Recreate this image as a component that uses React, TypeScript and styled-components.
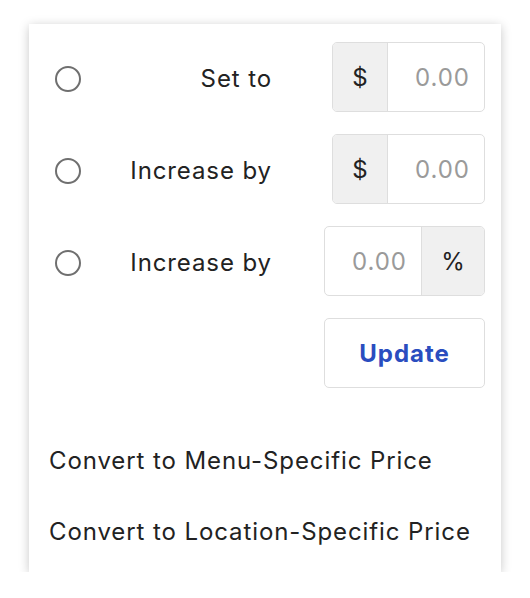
import React from 'react';
import styled, { createGlobalStyle } from 'styled-components';

const GlobalStyle = createGlobalStyle`
    body {
        margin: 0;
        background: #ffffff;
        font-family: Inter, "Noto Sans", sans-serif;
        color: #222222;
    }
`;

const Page = styled.div`
    padding: 24px 29px 0 29px;
`;

const Card = styled.div`
    width: 472px;
    height: 548px;
    box-sizing: border-box;
    background: #ffffff;
    box-shadow: 0 2px 10px rgba(0, 0, 0, 0.22);
    padding: 18px 16px 0 26px;
    display: flex;
    flex-direction: column;
`;

const Options = styled.div`
    display: flex;
    flex-direction: column;
    gap: 22px;
`;

const Row = styled.label`
    display: flex;
    align-items: center;
    height: 70px;
    font-size: 24px;
    letter-spacing: 0.9px;
`;

const Radio = styled.span`
    width: 26px;
    height: 26px;
    margin-top: 4px;
    box-sizing: border-box;
    border: 2px solid #6f6f6f;
    border-radius: 50%;
    flex: none;
`;

const Label = styled.span`
    width: 191px;
    margin-top: 2px;
    text-align: right;
`;

const InputGroup = styled.div<{ $width: number }>`
    margin-left: auto;
    width: ${p => p.$width}px;
    display: flex;
    height: 70px;
    box-sizing: border-box;
    border: 1.5px solid #dedede;
    border-radius: 5px;
    overflow: hidden;
`;

const Addon = styled.span<{ $width: number; $side: 'left' | 'right' }>`
    width: ${p => p.$width}px;
    flex: none;
    background: #f0f0f0;
    display: flex;
    align-items: center;
    justify-content: center;
    letter-spacing: 0;
    ${p => (p.$side === 'left' ? 'border-right' : 'border-left')}: 1.5px solid #dedede;
`;

const Field = styled.span`
    flex: 1;
    display: flex;
    align-items: center;
    justify-content: flex-end;
    padding-right: 14px;
    color: #9a9a9a;
    letter-spacing: 1px;
`;

const Actions = styled.div`
    display: flex;
    justify-content: flex-end;
`;

const UpdateButton = styled.button`
    width: 161px;
    height: 70px;
    background: #ffffff;
    border: 1.5px solid #dedede;
    border-radius: 5px;
    font-family: Inter, "Noto Sans", sans-serif;
    font-size: 24px;
    font-weight: 700;
    letter-spacing: 1px;
    color: #2a4dbf;
`;

const Menu = styled.div`
    margin: 37px 0 0 -6px;
    display: flex;
    flex-direction: column;
`;

const MenuItem = styled.div`
    height: 71px;
    display: flex;
    align-items: center;
    font-size: 24px;
    letter-spacing: 0.9px;
`;

const options = [
    { label: 'Set to', addon: '$', side: 'left' as const },
    { label: 'Increase by', addon: '$', side: 'left' as const },
    { label: 'Increase by', addon: '%', side: 'right' as const },
];

export default function App() {
    return (
        <>
            <GlobalStyle />
            <Page>
                <Card>
                    <Options>
                        {options.map(({ label, addon, side }, i) => (
                            <Row key={i}>
                                <Radio />
                                <Label>{label}</Label>
                                {side === 'left' ? (
                                    <InputGroup $width={153}>
                                        <Addon $width={54} $side="left">{addon}</Addon>
                                        <Field>0.00</Field>
                                    </InputGroup>
                                ) : (
                                    <InputGroup $width={161}>
                                        <Field>0.00</Field>
                                        <Addon $width={62} $side="right">{addon}</Addon>
                                    </InputGroup>
                                )}
                            </Row>
                        ))}
                        <Actions>
                            <UpdateButton>Update</UpdateButton>
                        </Actions>
                    </Options>
                    <Menu>
                        <MenuItem>Convert to Menu-Specific Price</MenuItem>
                        <MenuItem>Convert to Location-Specific Price</MenuItem>
                    </Menu>
                </Card>
            </Page>
        </>
    );
}
